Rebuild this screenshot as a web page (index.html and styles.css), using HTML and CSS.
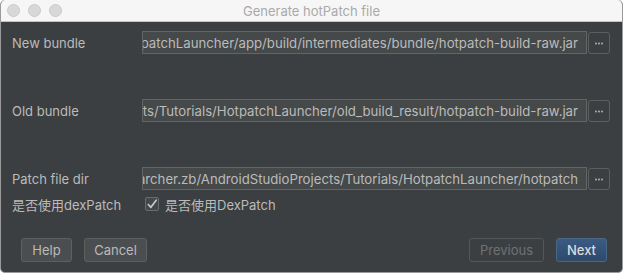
FILE: index.html
```html
<!DOCTYPE html>
<html>
<head>
<meta charset="utf-8">
<link rel="stylesheet" href="styles.css">
</head>
<body>
<div class="window">
  <div class="titlebar">
    <div class="lights"><span class="light"></span><span class="light"></span><span class="light"></span></div>
    <div class="title">Generate hotPatch file</div>
  </div>
  <div class="content">
    <div class="row row-first">
      <div class="label">New bundle</div>
      <div class="field"><span>/Users/archer.zb/AndroidStudioProjects/Tutorials/HotpatchLauncher/app/build/intermediates/bundle/hotpatch-build-raw.jar</span></div>
      <div class="browse"><svg width="20" height="20" viewBox="0 0 20 20"><circle cx="7" cy="10.5" r="0.9" fill="#bbbbbb"/><circle cx="10" cy="10.5" r="0.9" fill="#bbbbbb"/><circle cx="13" cy="10.5" r="0.9" fill="#bbbbbb"/></svg></div>
    </div>
    <div class="row row-gap">
      <div class="label">Old bundle</div>
      <div class="field"><span>/Users/archer.zb/AndroidStudioProjects/Tutorials/HotpatchLauncher/old_build_result/hotpatch-build-raw.jar</span></div>
      <div class="browse"><svg width="20" height="20" viewBox="0 0 20 20"><circle cx="7" cy="10.5" r="0.9" fill="#bbbbbb"/><circle cx="10" cy="10.5" r="0.9" fill="#bbbbbb"/><circle cx="13" cy="10.5" r="0.9" fill="#bbbbbb"/></svg></div>
    </div>
    <div class="row row-gap">
      <div class="label">Patch file dir</div>
      <div class="field"><span>/Users/archer.zb/AndroidStudioProjects/Tutorials/HotpatchLauncher/hotpatch</span></div>
      <div class="browse"><svg width="20" height="20" viewBox="0 0 20 20"><circle cx="7" cy="10.5" r="0.9" fill="#bbbbbb"/><circle cx="10" cy="10.5" r="0.9" fill="#bbbbbb"/><circle cx="13" cy="10.5" r="0.9" fill="#bbbbbb"/></svg></div>
    </div>
    <div class="row row-check">
      <div class="label">是否使用dexPatch</div>
      <label class="check">
        <span class="box"><svg width="13" height="13" viewBox="0 0 13 13"><path d="M2.5 6.5 L5.3 9.6 L11 1.8" fill="none" stroke="#c9c9c9" stroke-width="1.8" stroke-linecap="round" stroke-linejoin="round"/></svg></span>
        <span class="check-text">是否使用DexPatch</span>
      </label>
    </div>
    <div class="buttons">
      <div class="group">
        <div class="btn btn-help">Help</div>
        <div class="btn btn-cancel">Cancel</div>
      </div>
      <div class="group">
        <div class="btn btn-prev">Previous</div>
        <div class="btn btn-next">Next</div>
      </div>
    </div>
  </div>
</div>
</body>
</html>
```
FILE: styles.css
```css
html, body {
  margin: 0;
  padding: 0;
  background: #ffffff;
}
body {
  width: 623px;
  height: 274px;
  overflow: hidden;
  font-family: Inter, "Noto Sans CJK SC", sans-serif;
  font-size: 13px;
}
.window {
  width: 623px;
  height: 273px;
  border-radius: 5px;
  overflow: hidden;
  background: #3c3f41;
  box-sizing: border-box;
  border: 1px solid #9a9a9a;
  border-top: none;
  display: flex;
  flex-direction: column;
}
.titlebar {
  height: 21px;
  background: #f6f6f6;
  border-bottom: 1px solid #c4c4c4;
  display: flex;
  align-items: center;
  flex-shrink: 0;
  position: relative;
}
.lights {
  display: flex;
  gap: 8px;
  padding-left: 6px;
}
.light {
  width: 11px;
  height: 11px;
  border-radius: 50%;
  background: #d8d8d8;
  border: 0.5px solid #c9c9c9;
}
.title {
  position: absolute;
  left: 0;
  right: 0;
  text-align: center;
  color: #a9a9a9;
  font-size: 13px;
  top: 3px;
}
.content {
  flex: 1;
  padding: 9px 12px 0 11px;
  display: flex;
  flex-direction: column;
}
.row {
  display: flex;
  align-items: center;
}
.row-gap {
  margin-top: 45px;
}
.row-check {
  margin-top: 6px;
  height: 16px;
}
.label {
  width: 130px;
  flex-shrink: 0;
  color: #bbbbbb;
  white-space: nowrap;
}
.field {
  width: 445px;
  flex-shrink: 0;
  height: 23px;
  box-sizing: border-box;
  border: 1px solid #646464;
  background: #45494a;
  color: #bbbbbb;
  display: flex;
  justify-content: flex-end;
  align-items: center;
  overflow: hidden;
  white-space: nowrap;
  padding-right: 8px;
  font-size: 13.2px;
}
.field span {
  flex-shrink: 0;
}
.browse {
  width: 22px;
  height: 22px;
  flex-shrink: 0;
  margin-left: 1px;
  box-sizing: border-box;
  border: 1px solid #5e6060;
  border-radius: 3px;
  display: flex;
  align-items: center;
  justify-content: center;
}
.check {
  display: flex;
  align-items: center;
  margin-left: 3px;
  color: #bbbbbb;
}
.box {
  width: 14px;
  height: 14px;
  box-sizing: border-box;
  border: 1px solid #6b6b6b;
  background: #43494a;
  border-radius: 2px;
  display: flex;
  align-items: center;
  justify-content: center;
}
.check-text {
  margin-left: 6px;
}
.buttons {
  display: flex;
  justify-content: space-between;
  margin-top: 26px;
  padding-left: 9px;
  padding-right: 3px;
}
.group {
  display: flex;
  gap: 12px;
}
.btn {
  height: 24px;
  box-sizing: border-box;
  border: 1px solid #5e6060;
  border-radius: 3px;
  background: #4a4e50;
  color: #bbbbbb;
  display: flex;
  align-items: center;
  justify-content: center;
}
.btn-help { width: 51px; }
.btn-cancel { width: 63px; }
.btn-prev {
  width: 75px;
  background: transparent;
  border-color: #545657;
  color: #6f7274;
}
.btn-next {
  width: 51px;
  background: linear-gradient(#3a5b83, #2e4a6c);
  border-color: #4a6785;
  color: #dcdcdc;
  font-weight: 500;
}
```
